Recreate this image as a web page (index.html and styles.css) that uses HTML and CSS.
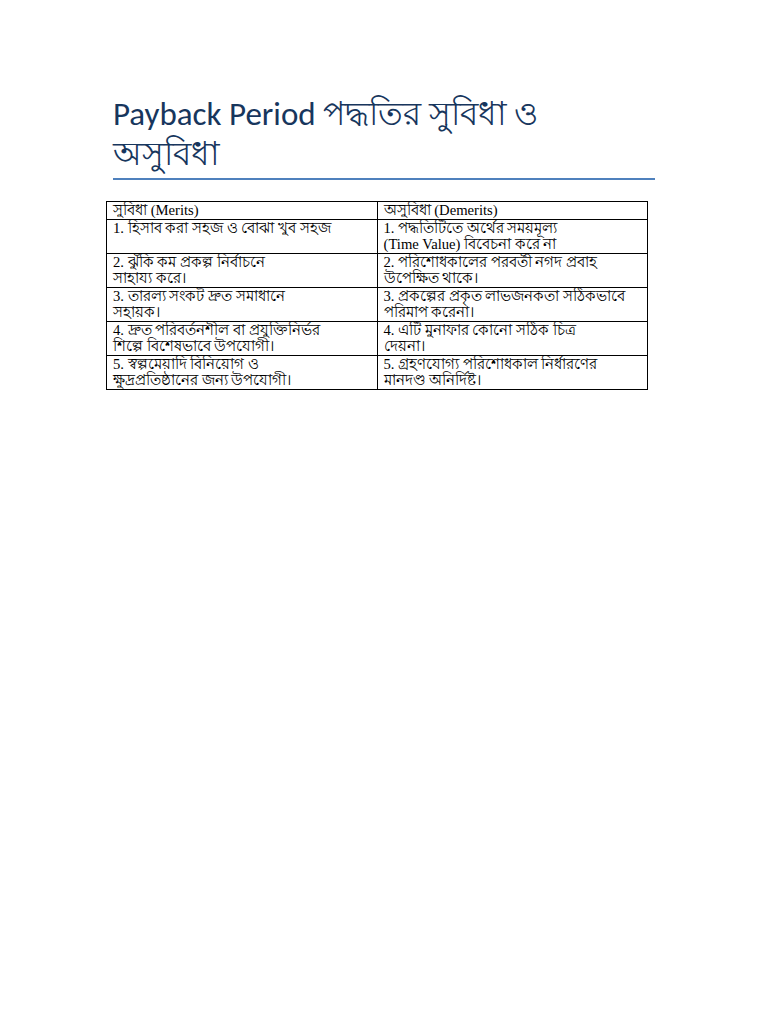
FILE: index.html
```html
<!DOCTYPE html>
<html lang="bn">
<head>
<meta charset="utf-8">
<title>Payback Period</title>
<link rel="stylesheet" href="styles.css">
</head>
<body>
<div class="page">
  <h1 class="title">Payback Period পদ্ধতির সুবিধা ও<br>অসুবিধা</h1>
  <table class="grid">
    <tr>
      <td>সুবিধা (Merits)</td>
      <td>অসুবিধা (Demerits)</td>
    </tr>
    <tr>
      <td>1. হিসাব করা সহজ ও বোঝা খুব সহজ</td>
      <td>1. পদ্ধতিটিতে অর্থের সময়মূল্য<br>(Time Value) বিবেচনা করে না</td>
    </tr>
    <tr>
      <td>2. ঝুঁকি কম প্রকল্প নির্বাচনে<br>সাহায্য করে।</td>
      <td>2. পরিশোধকালের পরবর্তী নগদ প্রবাহ<br>উপেক্ষিত থাকে।</td>
    </tr>
    <tr>
      <td>3. তারল্য সংকট দ্রুত সমাধানে<br>সহায়ক।</td>
      <td>3. প্রকল্পের প্রকৃত লাভজনকতা সঠিকভাবে<br>পরিমাপ করেনা।</td>
    </tr>
    <tr>
      <td>4. দ্রুত পরিবর্তনশীল বা প্রযুক্তিনির্ভর<br>শিল্পে বিশেষভাবে উপযোগী।</td>
      <td>4. এটি মুনাফার কোনো সঠিক চিত্র<br>দেয়না।</td>
    </tr>
    <tr>
      <td>5. স্বল্পমেয়াদি বিনিয়োগ ও<br>ক্ষুদ্রপ্রতিষ্ঠানের জন্য উপযোগী।</td>
      <td>5. গ্রহণযোগ্য পরিশোধকাল নির্ধারণের<br>মানদণ্ড অনির্দিষ্ট।</td>
    </tr>
  </table>
</div>
</body>
</html>
```

FILE: styles.css
```css
html, body {
  margin: 0;
  padding: 0;
  background: #ffffff;
}

.page {
  width: 542px;
  margin: 0 auto;
  padding-top: 94px;
}

.title {
  margin: 0 0 21px 0;
  padding-bottom: 4px;
  border-bottom: 2px solid #4f81bd;
  font-family: "Carlito", "Lato", "Open Sans", sans-serif;
  font-weight: 400;
  font-size: 33px;
  line-height: 40px;
  color: #17365d;
}

.grid {
  margin-left: -7px;
  width: 542px;
  border-collapse: collapse;
  table-layout: fixed;
  font-family: "Liberation Serif", "DejaVu Serif", serif;
  font-size: 14.67px;
  line-height: 16.5px;
  color: #000000;
}

.grid td {
  border: 1px solid #000000;
  padding: 0 6px 0 6px;
  vertical-align: top;
  width: 50%;
  white-space: nowrap;
  overflow: hidden;
}
```
